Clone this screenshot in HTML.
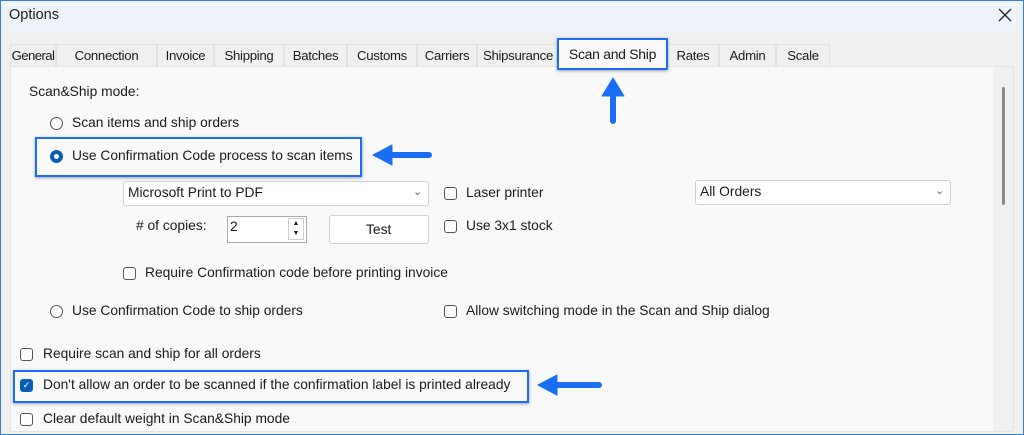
<!DOCTYPE html>
<html><head><meta charset="utf-8"><style>
*{margin:0;padding:0;box-sizing:border-box}
body{width:1024px;height:435px;overflow:hidden;background:#f0f0f0;font-family:"Liberation Sans",sans-serif;font-size:13.8px;color:#1a1a1a;position:relative}
.a{position:absolute;white-space:nowrap}
.frame{position:absolute;left:0;top:0;width:1024px;height:435px;border:1px solid #3a7bd5;pointer-events:none}
.title{left:1px;top:1px;width:1022px;height:32px;background:#eef3f9}
.tab{position:absolute;top:44px;height:23px;border:1px solid #e2e2e2;border-bottom:none;background:#f0f0f0;text-align:center;line-height:22px;font-size:13.2px;letter-spacing:-0.3px;white-space:nowrap}
.panel{left:10px;top:66px;width:1004px;height:366px;background:#f9f9f9;border:1px solid #e4e4e4}
.cb{position:absolute;width:13px;height:13px;border:1px solid #555;border-radius:3px;background:#fff}
.rb{position:absolute;width:13px;height:13px;border:1px solid #555;border-radius:50%;background:#fff}
.box{position:absolute;border:2px solid #1a6ef5;box-shadow:0 1px 3px rgba(0,0,0,.35)}
.input{position:absolute;background:#fff;border:1px solid #d0d0d0;border-radius:3px}
</style></head><body>
<div class="a title"></div>
<div class="a" style="left:9px;top:7px;font-size:14.5px">Options</div>
<svg class="a" style="left:998px;top:8px" width="14" height="14"><path d="M1 1L13 13M13 1L1 13" stroke="#222" stroke-width="1.3"/></svg>

<div class="tab" style="left:10px;width:46px;letter-spacing:-0.6px">General</div>
<div class="tab" style="left:56px;width:101px">Connection</div>
<div class="tab" style="left:157px;width:57px">Invoice</div>
<div class="tab" style="left:214px;width:70px">Shipping</div>
<div class="tab" style="left:284px;width:63px">Batches</div>
<div class="tab" style="left:347px;width:70px">Customs</div>
<div class="tab" style="left:417px;width:60px">Carriers</div>
<div class="tab" style="left:477px;width:82px">Shipsurance</div>
<div class="tab" style="left:667px;width:52px">Rates</div>
<div class="tab" style="left:719px;width:57px">Admin</div>
<div class="tab" style="left:776px;width:54px">Scale</div>

<div class="a panel"></div>
<div class="tab" style="left:559px;top:40px;width:107px;height:28px;background:#f9f9f9;line-height:26px;border-color:#f9f9f9;font-size:14px">Scan and Ship</div>
<div class="box" style="left:557px;top:38px;width:111px;height:32px"></div>

<div class="a" style="left:993px;top:67px;width:20px;height:364px;background:#f0f0f0"></div>
<div class="a" style="left:1002px;top:87px;width:3px;height:118px;background:#8a8a8a;border-radius:2px"></div>

<div class="a" style="left:29px;top:84px">Scan&amp;Ship mode:</div>
<div class="rb" style="left:50px;top:117px"></div>
<div class="a" style="left:72px;top:115px">Scan items and ship orders</div>
<div class="rb" style="left:50px;top:150px;border:4px solid #0a5fb4"></div>
<div class="a" style="left:72px;top:148px">Use Confirmation Code process to scan items</div>
<div class="box" style="left:35px;top:137px;width:327px;height:40px"></div>

<div class="input" style="left:123px;top:181px;width:306px;height:25px"></div>
<div class="a" style="left:128px;top:185px">Microsoft Print to PDF</div>
<div class="a" style="left:413px;top:185px;color:#666;font-size:11px">&#8964;</div>
<div class="cb" style="left:444px;top:187px"></div>
<div class="a" style="left:466px;top:185px">Laser printer</div>
<div class="input" style="left:695px;top:180px;width:256px;height:25px"></div>
<div class="a" style="left:700px;top:184px">All Orders</div>
<div class="a" style="left:935px;top:184px;color:#666;font-size:11px">&#8964;</div>

<div class="a" style="left:136px;top:218px">#&nbsp;of copies:</div>
<div class="input" style="left:227px;top:216px;width:80px;height:27px;border-radius:0;border-color:#aaa"></div>
<div class="a" style="left:230px;top:219px">2</div>
<div class="a" style="left:288px;top:218px;width:16px;height:22px;border:1px solid #ccc;font-size:7px;line-height:10px;text-align:center">▲<br>▼</div>
<div class="input" style="left:329px;top:215px;width:100px;height:29px"></div>
<div class="a" style="left:366px;top:222px">Test</div>
<div class="cb" style="left:444px;top:220px"></div>
<div class="a" style="left:466px;top:218px">Use 3x1 stock</div>

<div class="cb" style="left:123px;top:267px"></div>
<div class="a" style="left:145px;top:265px">Require Confirmation code before printing invoice</div>

<div class="rb" style="left:50px;top:305px"></div>
<div class="a" style="left:72px;top:303px">Use Confirmation Code to ship orders</div>
<div class="cb" style="left:444px;top:305px"></div>
<div class="a" style="left:466px;top:303px">Allow switching mode in the Scan and Ship dialog</div>

<div class="cb" style="left:20px;top:348px"></div>
<div class="a" style="left:43px;top:346px">Require scan and ship for all orders</div>
<div class="cb" style="left:20px;top:379px;background:#0a5fb4;border-color:#0a5fb4;color:#fff;font-size:9px;line-height:11px;text-align:center">✓</div>
<div class="a" style="left:43px;top:377px">Don't allow an order to be scanned if the confirmation label is printed already</div>
<div class="box" style="left:13px;top:370px;width:516px;height:33px"></div>
<div class="cb" style="left:20px;top:413px"></div>
<div class="a" style="left:43px;top:411px">Clear default weight in Scan&amp;Ship mode</div>

<svg class="a" style="left:0;top:0" width="1024" height="435">
<g fill="#1a6ef5" stroke="#1a6ef5" stroke-linejoin="round">
<path d="M613 78 L602 96 L624 96 Z"/><rect x="610" y="94" width="6" height="30" rx="3" stroke="none"/>
<path d="M373 155 L392 145 L392 165 Z"/><rect x="390" y="152" width="42" height="6" rx="3" stroke="none"/>
<path d="M538 385 L557 375 L557 395 Z"/><rect x="555" y="382" width="47" height="6" rx="3" stroke="none"/>
</g></svg>
<div class="frame"></div>
</body></html>
